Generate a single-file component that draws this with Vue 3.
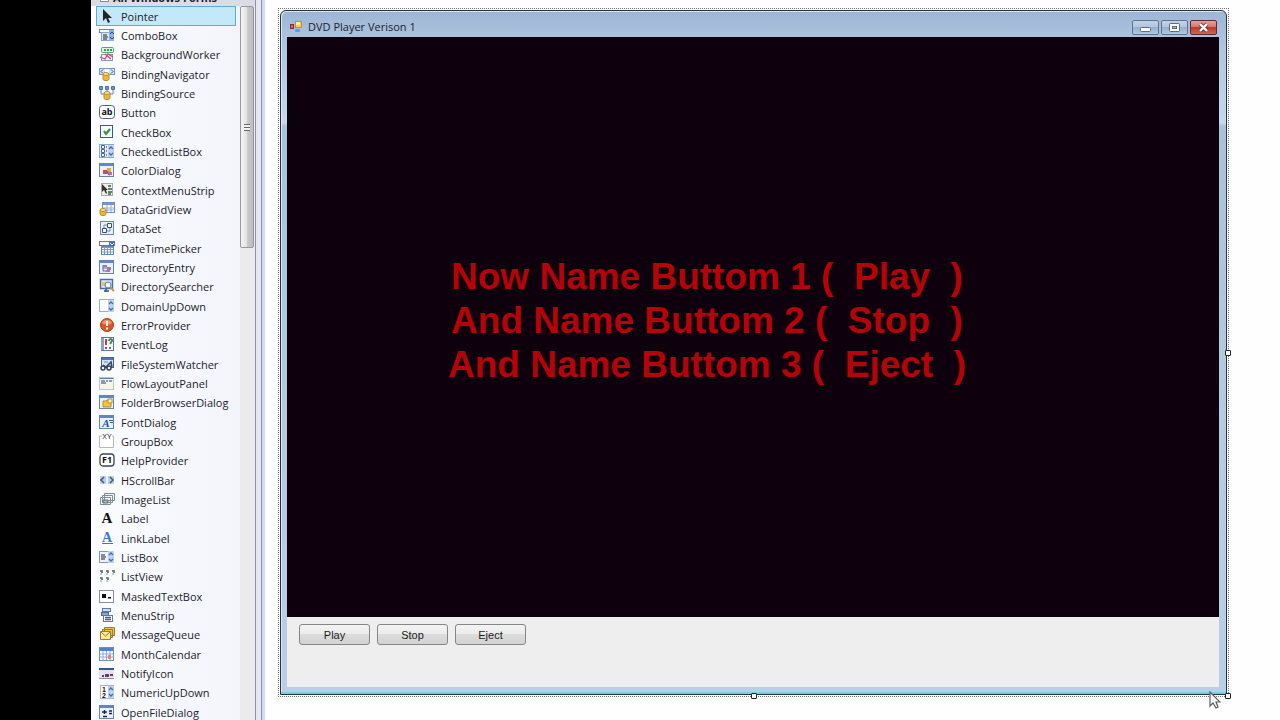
<template>
  <div class="ide">
    <aside class="toolbox">
      <div class="group-header">
        <span class="expander"></span>
        <span>All Windows Forms</span>
      </div>
      <div class="toolbox-body">
        <ul class="tool-list">
          <li v-for="tool in tools" :key="tool.name">
            <button
              type="button"
              class="tool"
              :class="{ selected: tool.name === selectedTool }"
              @click="selectedTool = tool.name"
            >
              <svg class="tool-icon" viewBox="0 0 16 16" aria-hidden="true" v-html="tool.icon" />
              <span>{{ tool.name }}</span>
            </button>
          </li>
        </ul>
        <div class="scrollbar">
          <div class="thumb">
            <span class="grip"></span>
          </div>
        </div>
      </div>
    </aside>
    <div class="splitter"></div>

    <main class="designer">
      <div class="selection">
        <section class="form-window">
          <header class="title-bar">
            <svg class="form-icon" viewBox="0 0 14 14" aria-hidden="true">
              <rect x="1.500" y="4.500" width="3" height="4" fill="#d9694f" stroke="#7d2c36" />
              <rect x="6.500" y="1.500" width="6" height="6" fill="#fbd14b" stroke="#c2902c" />
              <rect x="7" y="2" width="4" height="3" fill="#fff0a0" />
              <rect x="6" y="9" width="5" height="3" rx="1" fill="#5a9bea" />
            </svg>
            <h1>DVD Player Verison 1</h1>
            <div class="window-buttons">
              <button type="button" aria-label="Minimize">
                <svg viewBox="0 0 25 13"><rect x="7.500" y="6.500" width="10" height="4" rx="1" fill="#fff" stroke="#5c6b80" /></svg>
              </button>
              <button type="button" aria-label="Maximize">
                <svg viewBox="0 0 25 13">
                  <rect x="7.500" y="2.500" width="10" height="8" rx="1" fill="#fff" stroke="#5c6b80" />
                  <rect x="10.500" y="5.500" width="4" height="2" fill="#a9bdd6" stroke="#5c6b80" />
                </svg>
              </button>
              <button type="button" class="close" aria-label="Close">
                <svg viewBox="0 0 25 13">
                  <path d="M9 3L16 10M16 3L9 10" stroke="#6b3a3a" stroke-width="4" />
                  <path d="M9 3L16 10M16 3L9 10" stroke="#fff" stroke-width="2.400" />
                </svg>
              </button>
            </div>
          </header>
          <div class="client">
            <div class="video">
              <p class="caption">
                <span v-for="line in captionLines" :key="line">{{ line }}</span>
              </p>
            </div>
            <div class="controls">
              <button v-for="label in ['Play', 'Stop', 'Eject']" :key="label" type="button">{{ label }}</button>
            </div>
          </div>
        </section>
        <span class="handle handle-right"></span>
        <span class="handle handle-bottom"></span>
        <span class="handle handle-corner"></span>
        <svg class="cursor" viewBox="0 0 12 18" aria-hidden="true">
          <path d="M1 1V15L4 12L7 17L9 16L7 11H11Z" fill="#f7f7f7" stroke="#5d5d62" stroke-width="1.200" />
        </svg>
      </div>
    </main>
  </div>
</template>

<script setup>
import { ref } from 'vue'

const selectedTool = ref('Pointer')

const captionLines = [
  'Now Name Buttom 1 (  Play  )',
  'And Name Buttom 2 (  Stop  )',
  'And Name Buttom 3 (  Eject  )'
]

// shared pieces of the toolbox glyphs
const dialog = '<rect x=".5" y="1.500" width="14" height="13" fill="#e9f1fc" stroke="#6583b5"/><path d="M1 2h13v2H1z" fill="#5c86d0"/>'
const cylinder = '<path d="M6 8v5c0 2 6 2 6 0V8" fill="#e9b93a" stroke="#b98f30"/><ellipse cx="9" cy="8" rx="3" ry="1.500" fill="#ffe48a" stroke="#b98f30"/>'
const arrows = '<path d="M9 2h6v12H9z" fill="#bcd2f4"/><path d="M10 6l2-2 2 2M10 10l2 2 2-2" fill="none" stroke="#4a6ba6" stroke-width="1.300"/>'

const tools = [
  { name: 'Pointer', icon: '<path d="M4 1v12l3-3 2 5 2-1-2-4h4z" fill="#222"/>' },
  {
    name: 'ComboBox',
    icon: '<rect x=".5" y="2.500" width="14" height="3" fill="#fff" stroke="#6583b5"/><rect x="2.500" y="5.500" width="12" height="8" fill="#dce7f7" stroke="#8ba6cf"/><path d="M10 3h5v11h-5z" fill="#8fb0e4"/><path d="M4 8h4M4 10h5M4 12h4" stroke="#222"/><path d="M11 7l2-2 2 2M11 10l2 2 2-2" fill="none" stroke="#244a8c"/>'
  },
  {
    name: 'BackgroundWorker',
    icon: '<rect x="2.500" y="1.500" width="12" height="5" rx="1" fill="#dff5df" stroke="#58a85c"/><path d="M5 4h2M8 4h2M11 4h2" stroke="#3d9f45" stroke-width="2"/><rect x="2.500" y="8.500" width="11" height="6" fill="#edf3fb" stroke="#7b9bc8"/><path d="M1 11l5 2 3-5 5 3M6 8l6 5" fill="none" stroke="#d0505e" stroke-width="1.300"/>'
  },
  {
    name: 'BindingNavigator',
    icon: '<rect x=".5" y="2.500" width="15" height="6" fill="#d9e5f6" stroke="#7796c3"/><path d="M4 3.500L2 5.500l2 2M12 3.500l2 2-2 2" fill="none" stroke="#2f5496"/><rect x="6" y="3" width="4" height="4" fill="#fff"/><path d="M4 8v5c0 2 6 2 6 0V8" fill="#e9b93a" stroke="#b98f30"/><ellipse cx="7" cy="8" rx="3" ry="1.500" fill="#ffe48a" stroke="#b98f30"/>'
  },
  {
    name: 'BindingSource',
    icon: '<path d="M2 4v5h4M14 4v5h-3M8 4v4" fill="none" stroke="#6583b5"/><path d="M.5 1.500h3v3h-3zM6.500 1.500h3v3h-3zM12.500 1.500h3v3h-3z" fill="#7096d8" stroke="#4d6ead"/><g transform="translate(-1 0)">' + cylinder + '</g>'
  },
  {
    name: 'Button',
    icon: '<rect x=".5" y="1.500" width="15" height="13" rx="3" fill="#fafcff" stroke="#4a6490"/><text x="8" y="11" font-family="Open Sans, sans-serif" font-size="9" font-weight="bold" text-anchor="middle" fill="#111">ab</text>'
  },
  {
    name: 'CheckBox',
    icon: '<rect x="1.500" y="1.500" width="12" height="12" fill="#f7fbff" stroke="#2f5d96"/><path d="M5 7l2 3 4-5" fill="none" stroke="#36953a" stroke-width="2.200"/>'
  },
  {
    name: 'CheckedListBox',
    icon: '<rect x=".5" y="1.500" width="14" height="13" fill="#e2ecfa" stroke="#8ba6cf"/>' + arrows + '<path d="M2.500 2.500h3v3h-3zM2.500 6.500h3v3h-3zM2.500 10.500h3v3h-3z" fill="#fff" stroke="#4d6a96"/><path d="M7 4h1M7 8h1M7 12h1" stroke="#222"/>'
  },
  {
    name: 'ColorDialog',
    icon: dialog + '<path d="M4 8h4v4H4z" fill="#e04a3c"/><path d="M8 6h4v4H8z" fill="#f0a23b"/><path d="M7 9l4 4" stroke="#4671c9" stroke-width="2"/><path d="M10 10h3v3h-3z" fill="#d26a94"/>'
  },
  {
    name: 'ContextMenuStrip',
    icon: '<rect x="2.500" y="1.500" width="11" height="12" fill="#f0f0eb" stroke="#a9ada4"/><path d="M9 4h3M9 7h4M9 10h4M9 12h3" stroke="#3c5c48" stroke-width="1.300"/><path d="M3 2v8l2-2 2 4 1-1-1-3h2z" fill="#333"/>'
  },
  {
    name: 'DataGridView',
    icon: '<rect x="3.500" y="1.500" width="12" height="10" fill="#fff" stroke="#7090c2"/><path d="M4 2h11v2H4z" fill="#6d96dc"/><path d="M4 7h11M4 9h11M8 4v7M12 4v7" stroke="#93add3"/><path d="M1 9v4c0 2 6 2 6 0V9" fill="#edba32" stroke="#b98f30"/><ellipse cx="4" cy="9" rx="3" ry="1.500" fill="#ffe48a" stroke="#b98f30"/>'
  },
  {
    name: 'DataSet',
    icon: '<rect x="1.500" y="1.500" width="13" height="13" fill="#e7eff9" stroke="#6c86ac"/><path d="M8.500 3.500h4v4h-4zM3.500 8.500h4v4h-4z" fill="#fff" stroke="#35527f"/><path d="M5 8V5h3M8 11h3V8" fill="none" stroke="#6c86ac"/>'
  },
  {
    name: 'DateTimePicker',
    icon: '<rect x=".5" y="1.500" width="15" height="4" fill="#fff" stroke="#5377b4"/><path d="M10 2h5v4h-5z" fill="#3d6fc9"/><path d="M11 3l2 2 2-2" fill="none" stroke="#fff"/><rect x="2.500" y="6.500" width="12" height="8" fill="#fff" stroke="#6384ba"/><path d="M3 7h11v1H3z" fill="#6d96dc"/><path d="M3 9.500h11M3 12h11M5.500 8v6M8.500 8v6M11.500 8v6" stroke="#7898c8"/>'
  },
  {
    name: 'DirectoryEntry',
    icon: dialog + '<path d="M4 6v6h3M4 9h5" fill="none" stroke="#5b65a8"/><path d="M4 6h4v2H4zM8 8h4v3H8zM7 11h4v2H7z" fill="#9f78b8"/>'
  },
  {
    name: 'DirectorySearcher',
    icon: '<rect x="1.500" y="1.500" width="12" height="9" fill="#dce9fb" stroke="#4a6fae" stroke-width="1.500"/><path d="M3 4h3v4H3z" fill="#efc84f"/><circle cx="9" cy="7" r="3" fill="#f2f8ff" stroke="#5576a8"/><path d="M11 9l4 4" stroke="#c99634" stroke-width="2"/><path d="M5 13h5M7 11v3" stroke="#355280" stroke-width="1.500"/>'
  },
  {
    name: 'DomainUpDown',
    icon: '<rect x=".5" y="1.500" width="14" height="12" fill="#fff" stroke="#9cb0cf"/>' + arrows
  },
  {
    name: 'ErrorProvider',
    icon: '<circle cx="8" cy="8" r="6.500" fill="#dd5527" stroke="#b23c16"/><path d="M3 6a5.500 5.500 0 0 1 10 0c-3 2-7 2-10 0z" fill="#f29468"/><path d="M8 4v5M8 10.500v2" stroke="#fff" stroke-width="2"/>'
  },
  {
    name: 'EventLog',
    icon: '<rect x="2.500" y="1.500" width="12" height="13" fill="#f5f8fc" stroke="#5f7699"/><path d="M2 2h3v12H2z" fill="#8ba1c8"/><path d="M7 3v6M7 11v2" stroke="#d33b32" stroke-width="2"/><path d="M10 5c0-3 4-2 3 0l-2 3M11 11v2" fill="none" stroke="#39834b" stroke-width="1.800"/>'
  },
  {
    name: 'FileSystemWatcher',
    icon: '<rect x="2.500" y="1.500" width="12" height="10" fill="#d4e2f5" stroke="#4a6288"/><path d="M3 3h11" stroke="#4a78c4" stroke-width="2"/><path d="M5 6h4" stroke="#6b89b7"/><circle cx="4" cy="12" r="2" fill="#edf3fb" stroke="#34445f" stroke-width="1.500"/><circle cx="10" cy="12" r="2" fill="#edf3fb" stroke="#34445f" stroke-width="1.500"/><path d="M4 9l3 2 5-5 1 5" stroke="#34445f" stroke-width="1.500" fill="none"/>'
  },
  {
    name: 'FlowLayoutPanel',
    icon: '<rect x=".5" y="2.500" width="14" height="12" fill="#f5f5ea" stroke="#c1c6c5"/><path d="M1 3h13v1H1z" fill="#5e7ca8"/><path d="M2 6h4M7 6h2M10 6h3M2 8h5" stroke="#667ea3" stroke-width="1.500"/>'
  },
  {
    name: 'FolderBrowserDialog',
    icon: dialog + '<path d="M4 7h3l1-1h4v7H4z" fill="#f0c63f" stroke="#b98f30"/><path d="M9 5h4v4H9z" fill="#fff4b1" stroke="#b98f30"/>'
  },
  {
    name: 'FontDialog',
    icon: dialog + '<text x="7" y="13" font-family="Liberation Serif, serif" font-size="11" font-style="italic" font-weight="bold" text-anchor="middle" fill="#244fa8">A</text><path d="M10 6.500h4M11 8.500h3" stroke="#345a9c"/>'
  },
  {
    name: 'GroupBox',
    icon: '<path d="M3 3H.5v11.500h14V3H13" fill="#fff" stroke="#b4b9c2"/><text x="8" y="6" font-family="Liberation Sans, sans-serif" font-size="7" text-anchor="middle" fill="#222">XY</text>'
  },
  {
    name: 'HelpProvider',
    icon: '<rect x="1" y="2" width="14" height="12" rx="3" fill="#fff" stroke="#39465b" stroke-width="1.300"/><text x="8" y="11" font-family="Open Sans, sans-serif" font-size="9" font-weight="bold" text-anchor="middle" fill="#111">F1</text>'
  },
  {
    name: 'HScrollBar',
    icon: '<path d="M1 4h14v8H1z" fill="#bcd0ed"/><path d="M7 4h2v8H7z" fill="#e9f1fc"/><path d="M5 5L2 8l3 3M11 5l3 3-3 3" fill="none" stroke="#3a598f" stroke-width="1.500"/>'
  },
  {
    name: 'ImageList',
    icon: '<path d="M5.500 2.500h10v7h-10zM3.500 4.500h10v7h-10zM1.500 6.500h10v7h-10z" fill="#f1f5f5" stroke="#7d8f98"/><path d="M4 9h5v3H4z" fill="#a2b9b7" stroke="#59707b"/>'
  },
  {
    name: 'Label',
    icon: '<text x="8" y="13" font-family="Liberation Serif, serif" font-size="15" font-weight="bold" text-anchor="middle" fill="#111">A</text>'
  },
  {
    name: 'LinkLabel',
    icon: '<text x="8" y="12" font-family="Liberation Serif, serif" font-size="14" font-weight="bold" text-anchor="middle" fill="#3c77cc">A</text><path d="M3 13.500h11" stroke="#3c77cc"/>'
  },
  {
    name: 'ListBox',
    icon: '<rect x=".5" y="2.500" width="14" height="11" fill="#eff4fc" stroke="#7e96bd"/>' + arrows + '<path d="M2 6h4M2 8h5M2 10h4" stroke="#222"/>'
  },
  {
    name: 'ListView',
    icon: '<path d="M1 3h2v2M7 3h2v2M13 3h2v2M1 10h2v2M7 10h2v2" fill="none" stroke="#4e625f" stroke-width="1.500"/><path d="M1 6h2M7 6h2M13 6h2M1 13h2M7 13h2" stroke="#8ba09a"/>'
  },
  {
    name: 'MaskedTextBox',
    icon: '<rect x=".5" y="2.500" width="14" height="12" fill="#fff" stroke="#8a909b"/><path d="M3 6h4v4H3zM9 9h3v1.500H9z" fill="#111"/>'
  },
  {
    name: 'MenuStrip',
    icon: '<rect x="3.500" y="1.500" width="8" height="3" fill="#d4e0f5" stroke="#61789f"/><rect x="2.500" y="5.500" width="7" height="3" fill="#86a6da" stroke="#4f6da2"/><rect x="4.500" y="8.500" width="9" height="6" fill="#fff" stroke="#61789f"/><path d="M6 10.500h6M6 12.500h6" stroke="#3d63a8" stroke-width="1.300"/>'
  },
  {
    name: 'MessageQueue',
    icon: '<path d="M5.500 1.500h10v8h-10zM3.500 3.500h10v8h-10z" fill="#e9c348" stroke="#9c7d31"/><path d="M1.500 5.500h10v8h-10z" fill="#ffe997" stroke="#9c7d31"/><path d="M2 6l4.500 4L11 6" fill="none" stroke="#9c7d31"/>'
  },
  {
    name: 'MonthCalendar',
    icon: '<rect x=".5" y="1.500" width="14" height="13" fill="#fff" stroke="#6990c8"/><path d="M1 2h13v3H1z" fill="#4f83d2"/><path d="M1 8h13M1 11h13M4 5v9M7.500 5v9M11 5v9" stroke="#8aaddc"/><path d="M9 9h3v4H9z" fill="#e88a5a"/>'
  },
  {
    name: 'NotifyIcon',
    icon: '<path d="M0 4h15v10H0z" fill="#e2e4ef"/><path d="M0 3h15v2H0z" fill="#3c5291"/><path d="M0 13h15v1H0z" fill="#8c92ae"/><path d="M3 11h2M7 9v3M9 9v3M11 10h3" stroke="#7d304a" stroke-width="2"/><path d="M6 10h2" stroke="#2e549d" stroke-width="2"/>'
  },
  {
    name: 'NumericUpDown',
    icon: '<rect x="1.500" y="1.500" width="13" height="13" fill="#fff" stroke="#a9b7cd"/>' + arrows + '<text x="3" y="8" font-family="Liberation Sans, sans-serif" font-size="7" font-weight="bold" fill="#111">1</text><text x="3" y="14" font-family="Liberation Sans, sans-serif" font-size="7" font-weight="bold" fill="#111">2</text>'
  },
  {
    name: 'OpenFileDialog',
    icon: dialog + '<path d="M3 8h5M5.500 6v4M4 12.500h4M10 7h3M10 9.500h3" stroke="#182848" stroke-width="1.400"/>'
  }
]
</script>

<style>
body {
  background: #000;
}
</style>

<style scoped>
.ide {
  display: flex;
  height: 100vh;
  padding-left: 91px;
  box-sizing: border-box;
  overflow: hidden;
  font-family: "Open Sans", "Noto Sans", sans-serif;
  font-size: 11px;
  color: #241c2c;
}

.toolbox {
  display: flex;
  flex-direction: column;
  width: 164px;
  flex-shrink: 0;
  background: linear-gradient(90deg, #fbfcfe 0, #f2f4fb 100%);
}

.group-header {
  display: flex;
  align-items: flex-end;
  height: 6px;
  flex-shrink: 0;
  gap: 4px;
  padding-left: 8px;
  overflow: hidden;
  background: #dcdce6;
  font-weight: bold;
  line-height: 16px;
  white-space: nowrap;
}

.expander {
  width: 7px;
  height: 7px;
  margin: 0 0 4px 1px;
  border: 1px solid #8b8b98;
  background: #fff;
}

.toolbox-body {
  display: flex;
  flex: 1;
  min-height: 0;
}

.tool-list {
  display: grid;
  grid-auto-rows: 19px 19px 20px;
  flex: 1;
  margin: 0;
  padding: 0 4px 0 5px;
  list-style: none;
}

.tool {
  display: flex;
  align-items: center;
  gap: 6px;
  width: 100%;
  height: 20px;
  padding: 0 2px;
  border: 1px solid transparent;
  background: none;
  font: inherit;
  color: inherit;
  white-space: nowrap;
}

.tool.selected {
  border-color: #5fabd2;
  background: #c3e8f8;
}

.tool-icon {
  width: 16px;
  height: 16px;
  flex-shrink: 0;
}

.scrollbar {
  width: 15px;
  background: #ebebee;
}

.thumb {
  display: flex;
  align-items: center;
  justify-content: center;
  width: 14px;
  height: 242px;
  box-sizing: border-box;
  border: 1px solid #989898;
  border-radius: 2px;
  background: linear-gradient(90deg, #f4f4f4 0, #e4e4e5 45%, #c9c9cb 55%, #bcbcbf 100%);
}

.grip {
  width: 6px;
  height: 7px;
  background: repeating-linear-gradient(#66666a 0, #66666a 1px, #f2f2f2 1px, #f2f2f2 3px);
}

.splitter {
  width: 5px;
  flex-shrink: 0;
  border-left: 1px solid #8d92ab;
  border-right: 1px solid #8d92ab;
  background: #e5e8f4;
}

.designer {
  flex: 1;
  display: flex;
  min-width: 0;
  padding: 8px 51px 23px 13px;
  border-left: 3px solid #d5dbec;
  background: #fdfefd;
}

.selection {
  position: relative;
  display: flex;
  flex: 1;
  min-width: 0;
  padding: 1px;
  border: 1px dotted #77757d;
}

.form-window {
  display: flex;
  flex-direction: column;
  flex: 1;
  min-width: 0;
  padding: 0 7px 7px 6px;
  border: 1px solid #27303c;
  border-radius: 6px 6px 0 0;
  box-shadow: inset 0 -2px #6bd3e2, inset 1px 1px #dce8f5;
  background: linear-gradient(#9db6d5 0, #adc5df 30px, #c6d9ed 112px, #a9c3d8 115px, #b4cbe0 60%, #b9cfe8 100%);
}

.title-bar {
  display: flex;
  align-items: center;
  height: 26px;
  padding: 0 2px;
}

.form-icon {
  width: 14px;
  height: 14px;
  margin-top: 6px;
}

.title-bar h1 {
  flex: 1;
  margin: 6px 0 0 5px;
  font-size: 11px;
  font-weight: normal;
  line-height: 16px;
}

.window-buttons {
  display: flex;
  gap: 2px;
  margin-top: 6px;
}

.window-buttons button {
  width: 27px;
  height: 15px;
  padding: 0;
  border: 1px solid #5f7390;
  border-radius: 2px;
  background: linear-gradient(#c2d3e8 0, #b0c5df 50%, #97b0cf 50%, #b0c8e2 100%);
}

.window-buttons svg {
  display: block;
  width: 25px;
  height: 13px;
}

.window-buttons .close {
  border-color: #5b2b35;
  background: linear-gradient(#e5a198 0, #d57468 50%, #bd3b2c 50%, #d46650 100%);
}

.client {
  display: flex;
  flex-direction: column;
  flex: 1;
  background: #eee;
}

.video {
  display: flex;
  align-items: center;
  justify-content: center;
  flex: 1;
  padding: 0 92px 12px 0;
  background: #0f000d;
}

.caption {
  display: flex;
  flex-direction: column;
  align-items: center;
  margin: 0;
  font-family: "Liberation Sans", Arial, sans-serif;
  font-size: 37px;
  font-weight: bold;
  line-height: 44px;
  color: #b40309;
  white-space: pre;
}

.controls {
  display: flex;
  gap: 7px;
  padding: 7px 12px 42px;
}

.controls button {
  width: 71px;
  height: 21px;
  padding: 0;
  border: 1px solid #858585;
  border-radius: 3px;
  background: linear-gradient(#f3f3f3 0, #ebebeb 50%, #dcdcdc 50%, #d2d2d2 100%);
  font-family: "Liberation Sans", Arial, sans-serif;
  font-size: 11px;
  color: #1c1c1c;
}

.handle {
  position: absolute;
  width: 6px;
  height: 6px;
  box-sizing: border-box;
  border: 1px solid #222;
  border-radius: 1px;
  background: #fff;
}

.handle-right {
  top: 50%;
  right: -3px;
  margin-top: -3px;
}

.handle-bottom {
  bottom: -3px;
  left: 50%;
  margin-left: -3px;
}

.handle-corner {
  right: -3px;
  bottom: -3px;
}

.cursor {
  position: absolute;
  right: 7px;
  bottom: -13px;
  width: 12px;
  height: 18px;
}
</style>
